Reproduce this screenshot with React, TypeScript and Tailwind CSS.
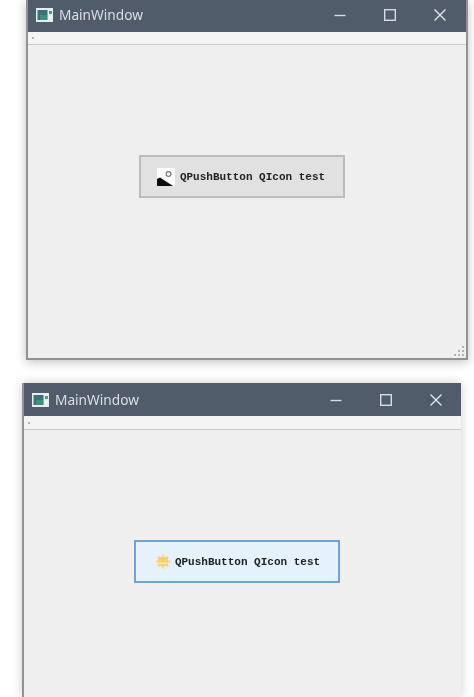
function AppIcon() {
  return (
    <svg width="17" height="14" viewBox="0 0 17 14" className="shrink-0">
      <rect x="0" y="0" width="17" height="14" fill="#e8eef0" />
      <rect x="1.5" y="2" width="10" height="10" fill="#3a7277" />
      <rect x="4" y="7" width="7" height="5" fill="#3f8f7a" />
      <rect x="13" y="3" width="3" height="3" fill="#4a9a84" />
      <rect x="13" y="8" width="3" height="2" fill="#f4f4f4" />
    </svg>
  );
}

function WindowControls() {
  return (
    <div className="flex items-center">
      <div className="w-[50px] flex justify-center">
        <svg width="12" height="12" viewBox="0 0 12 12">
          <path d="M0.5 6.5H11.5" stroke="#d6dce2" strokeWidth="1.4" />
        </svg>
      </div>
      <div className="w-[50px] flex justify-center">
        <svg width="12" height="12" viewBox="0 0 12 12">
          <rect x="0.7" y="0.7" width="10.6" height="10.6" fill="none" stroke="#d6dce2" strokeWidth="1.4" />
        </svg>
      </div>
      <div className="w-[50px] flex justify-center">
        <svg width="12" height="12" viewBox="0 0 12 12">
          <path d="M0.5 0.5L11.5 11.5M11.5 0.5L0.5 11.5" stroke="#e4e8ec" strokeWidth="1.4" />
        </svg>
      </div>
    </div>
  );
}

function TitleBar({ top }: { top?: boolean }) {
  return (
    <div
      className={
        top
          ? "h-[32px] shrink-0 bg-[#505c69] flex items-center justify-between pl-[8px] pr-[1px] pb-[2px]"
          : "h-[33px] shrink-0 bg-[#505c69] flex items-center justify-between pl-[8px]"
      }
    >
      <div className="flex items-center gap-[6px]">
        <AppIcon />
        <span className="text-[13.7px] text-[#d9dee3] font-['Noto_Sans',sans-serif] leading-none">MainWindow</span>
      </div>
      <WindowControls />
    </div>
  );
}

function Toolbar({ top }: { top?: boolean }) {
  return (
    <div
      className={
        top
          ? "h-[13px] shrink-0 bg-[#f4f4f4] border-b border-[#c9c9c9] flex items-center pl-[4px]"
          : "h-[14px] shrink-0 bg-[#f4f4f4] border-b border-[#c9c9c9] flex items-center pl-[4px]"
      }
    >
      <span className="w-[2px] h-[2px] bg-[#b5b5b5]" />
    </div>
  );
}

function SizeGrip() {
  return (
    <svg width="11" height="11" viewBox="0 0 11 11" className="absolute right-[1px] bottom-[1px]">
      <g fill="#b4b4b4">
        <rect x="8" y="0" width="2" height="2" />
        <rect x="4" y="4" width="2" height="2" />
        <rect x="8" y="4" width="2" height="2" />
        <rect x="0" y="8" width="2" height="2" />
        <rect x="4" y="8" width="2" height="2" />
        <rect x="8" y="8" width="2" height="2" />
      </g>
    </svg>
  );
}

function ImageIcon() {
  return (
    <svg width="18" height="18" viewBox="0 0 18 18" className="shrink-0">
      <rect width="18" height="18" fill="#fdfdfd" />
      <circle cx="11.5" cy="6" r="2.4" fill="none" stroke="#777" strokeWidth="1.2" />
      <path d="M0 11L3 9.5L16 18H0Z" fill="#0c0c0c" />
    </svg>
  );
}

function SunIcon() {
  return (
    <svg width="14" height="15" viewBox="0 0 16 16" className="shrink-0">
      <g stroke="#f9d98c" strokeWidth="3">
        <path d="M8 0V16M0 8H16M2.5 2.5L13.5 13.5M13.5 2.5L2.5 13.5" />
      </g>
      <rect x="2.5" y="3" width="11" height="10" fill="#f5cf70" />
      <rect x="3" y="9" width="10" height="2" fill="#fbe6ae" />
    </svg>
  );
}

function PushButton({ hover }: { hover?: boolean }) {
  return (
    <button
      className={
        hover
          ? "w-[206px] h-[43px] border-2 border-[#6ea3d2] bg-[#e5f1fb] flex items-center justify-center gap-[5px] pr-[2px]"
          : "w-[206px] h-[43px] border-2 border-[#bcbcbc] bg-[#e1e1e1] flex items-center justify-center gap-[5px] pr-[2px]"
      }
    >
      <span className="w-[18px] flex justify-end">{hover ? <SunIcon /> : <ImageIcon />}</span>
      <span className="text-[11px] pt-[2px] font-bold text-[#222222] font-['Liberation_Mono',monospace] leading-none whitespace-nowrap">
        QPushButton QIcon test
      </span>
    </button>
  );
}

export default function App() {
  return (
    <div className="w-[474px] h-[697px] overflow-hidden bg-white blur-[0.4px]">
      <div className="ml-[26px] w-[442px] h-[360px] flex flex-col border-x-2 border-b-2 border-[#8f9296] bg-[#efefef] shadow-[0_2px_10px_rgba(0,0,0,0.25)] relative">
        <TitleBar top />
        <Toolbar top />
        <div className="flex-1 flex justify-center pt-[110px] pr-[10px]">
          <PushButton />
        </div>
        <SizeGrip />
      </div>
      <div className="mt-[23px] ml-[22px] w-[439px] h-[314px] flex flex-col border-l-2 border-[#8f9296] bg-[#efefef] shadow-[0_0_10px_rgba(0,0,0,0.2)]">
        <TitleBar />
        <Toolbar />
        <div className="flex-1 flex justify-center pt-[110px] pr-[11px]">
          <PushButton hover />
        </div>
      </div>
    </div>
  );
}
